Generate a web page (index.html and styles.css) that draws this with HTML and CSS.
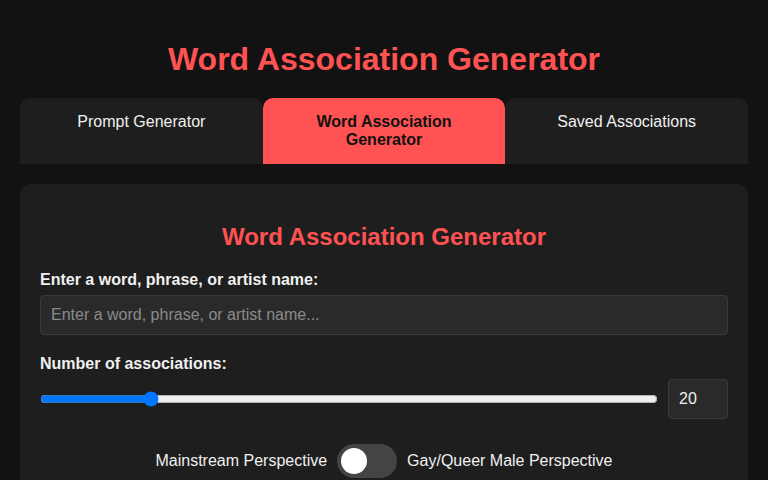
FILE: index.html
```html
<!DOCTYPE html>
<html lang="en">
<head>
<meta charset="utf-8">
<title>Word Association Generator</title>
<link rel="stylesheet" href="styles.css">
</head>
<body>
<div class="container">
  <h1 class="title">Word Association Generator</h1>
  <div class="tabs">
    <div class="tab">Prompt Generator</div>
    <div class="tab active">Word Association Generator</div>
    <div class="tab">Saved Associations</div>
  </div>
  <div class="panel">
    <h2 class="panel-title">Word Association Generator</h2>
    <div class="field">
      <label class="label" for="word">Enter a word, phrase, or artist name:</label>
      <input class="text-input" id="word" type="text" placeholder="Enter a word, phrase, or artist name...">
    </div>
    <div class="field">
      <label class="label" for="count">Number of associations:</label>
      <div class="slider-row">
        <input class="slider" id="count" type="range" min="2" max="107" value="20">
        <input class="number-input" type="number" value="20">
      </div>
    </div>
    <div class="toggle-row">
      <span class="toggle-label">Mainstream Perspective</span>
      <span class="switch"><span class="knob"></span></span>
      <span class="toggle-label">Gay/Queer Male Perspective</span>
    </div>
  </div>
</div>
</body>
</html>
```
FILE: styles.css
```css
* { box-sizing: border-box; }
html, body { margin: 0; }
body {
  background: #121212;
  color: #f0f0f0;
  font-family: "Liberation Sans", Arial, sans-serif;
  padding: 0 20px;
  overflow: hidden;
}
.container { padding-top: 1px; }
.title {
  text-align: center;
  color: #ff5252;
  font-size: 32px;
  font-weight: bold;
  margin: 40px 0 20px;
  line-height: 37px;
}
.tabs {
  display: flex;
}
.tab {
  flex: 1 1 0;
  min-width: 0;
  background: #1e1e1e;
  color: #f0f0f0;
  border-radius: 10px 10px 0 0;
  font-size: 16px;
  line-height: 18px;
  padding: 15px 40px 15px;
  text-align: center;
  min-height: 66px;
}
.tab.active {
  background: #ff5252;
  color: #111;
  font-weight: bold;
}
.panel {
  margin-top: 20px;
  background: #1e1e1e;
  border-radius: 10px;
  padding: 20px 20px 40px;
}
.panel-title {
  text-align: center;
  color: #ff5252;
  font-size: 24px;
  line-height: 28px;
  margin: 19px 0 20px;
}
.field { margin-bottom: 20px; }
.label {
  display: block;
  font-weight: bold;
  font-size: 16px;
  line-height: 18px;
  margin-bottom: 6px;
}
.text-input {
  display: block;
  width: 100%;
  height: 40px;
  background: #2a2a2a;
  border: 1px solid #3a3a3a;
  border-radius: 4px;
  color: #f0f0f0;
  font-family: inherit;
  font-size: 16px;
  padding: 0 10px;
}
.text-input::placeholder { color: #8a8a8a; }
.slider-row {
  display: flex;
  align-items: center;
  gap: 10px;
  margin-top: 4px;
}
.slider {
  flex: 1;
  margin: 0;
  accent-color: #0075ff;
}
.number-input {
  width: 60px;
  height: 40px;
  background: #2a2a2a;
  border: 1px solid #3a3a3a;
  border-radius: 4px;
  color: #f0f0f0;
  font-family: inherit;
  font-size: 16px;
  padding: 0 10px;
  -moz-appearance: textfield;
}
.number-input::-webkit-inner-spin-button,
.number-input::-webkit-outer-spin-button { -webkit-appearance: none; margin: 0; }
.toggle-row {
  display: flex;
  justify-content: center;
  align-items: center;
  gap: 10px;
  margin-top: 25px;
}
.toggle-label { font-size: 16px; color: #f0f0f0; }
.switch {
  position: relative;
  display: inline-block;
  width: 60px;
  height: 34px;
  background: #444;
  border-radius: 34px;
}
.knob {
  position: absolute;
  left: 4px;
  top: 4px;
  width: 26px;
  height: 26px;
  border-radius: 50%;
  background: #fff;
}
```
